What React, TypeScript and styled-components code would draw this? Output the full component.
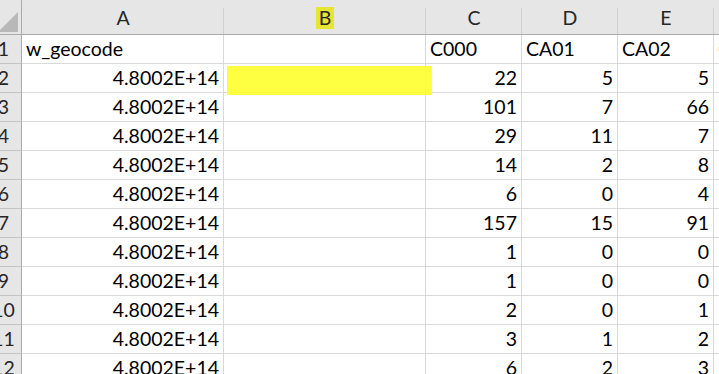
import React from "react";
import styled, { createGlobalStyle } from "styled-components";

const GlobalStyle = createGlobalStyle`
  html, body {
    margin: 0;
    padding: 0;
    background: #ffffff;
    overflow: hidden;
  }
`;

const Sheet = styled.div`
  display: grid;
  grid-template-columns: 36px 202px 202px 96px 96px 96px 96px;
  grid-template-rows: 35px repeat(12, 29px);
  margin-left: -14px;
  width: max-content;
  font-family: Lato, "Liberation Sans", sans-serif;
  font-size: 19.5px;
  color: #000000;
  background: #ffffff;
`;

const Corner = styled.div`
  background: #e6e6e6;
  border-right: 1px solid #ababab;
  border-bottom: 1px solid #ababab;
  display: flex;
  justify-content: flex-end;
  align-items: flex-end;
  padding: 0 3px 2px 0;

  svg {
    display: block;
  }
`;

const ColHead = styled.div`
  background:
    linear-gradient(#cfcfcf, #cfcfcf) right bottom / 1px 26px no-repeat,
    #e6e6e6;
  border-bottom: 1px solid #ababab;
  display: flex;
  justify-content: center;
  align-items: flex-end;
  line-height: 26px;
  padding-bottom: 3px;
  color: #262626;
`;

const HeadLabel = styled.span<{ $marked?: boolean }>`
  padding: 0 3px;
  background: ${(p) => (p.$marked ? "#e6e632" : "transparent")};
  line-height: 22px;
  margin-bottom: 2px;
`;

const RowHead = styled.div`
  background: #e6e6e6;
  border-right: 1px solid #ababab;
  border-bottom: 1px solid #c4c4c4;
  text-align: center;
  line-height: 28px;
  color: #262626;
`;

const Cell = styled.div<{ $num?: boolean; $tint?: string }>`
  position: relative;
  border-right: 1px solid #d9d9d9;
  border-bottom: 1px solid #d9d9d9;
  padding: 0 4px;
  line-height: 28px;
  white-space: nowrap;
  overflow: visible;
  text-align: ${(p) => (p.$num ? "right" : "left")};
  color: ${(p) => p.$tint ?? "inherit"};
`;

const Marker = styled.div`
  position: absolute;
  left: 3px;
  top: 2px;
  width: 205px;
  height: 29px;
  background: rgba(255, 255, 40, 0.88);
  z-index: 1;
`;

const cols = ["A", "B", "C", "D", "E", "F"];

const rows: (string | number)[][] = [
  [22, 5, 5],
  [101, 7, 66],
  [29, 11, 7],
  [14, 2, 8],
  [6, 0, 4],
  [157, 15, 91],
  [1, 0, 0],
  [1, 0, 0],
  [2, 0, 1],
  [3, 1, 2],
  [6, 2, 3],
];

export default function App() {
  return (
    <>
      <GlobalStyle />
      <Sheet>
        <Corner>
          <svg width="20" height="20" viewBox="0 0 20 20">
            <polygon points="20,0 20,20 0,20" fill="#b8b8b8" />
          </svg>
        </Corner>
        {cols.map((c) => (
          <ColHead key={c}>
            <HeadLabel $marked={c === "B"}>{c}</HeadLabel>
          </ColHead>
        ))}

        <RowHead>1</RowHead>
        <Cell>w_geocode</Cell>
        <Cell />
        <Cell>C000</Cell>
        <Cell>CA01</Cell>
        <Cell>CA02</Cell>
        <Cell $tint="#d0651a">CA03</Cell>

        {rows.map((r, i) => (
          <React.Fragment key={i}>
            <RowHead>{i + 2}</RowHead>
            <Cell $num>4.8002E+14</Cell>
            <Cell>{i === 0 && <Marker />}</Cell>
            <Cell $num>{r[0]}</Cell>
            <Cell $num>{r[1]}</Cell>
            <Cell $num>{r[2]}</Cell>
            <Cell $num />
          </React.Fragment>
        ))}
      </Sheet>
    </>
  );
}
